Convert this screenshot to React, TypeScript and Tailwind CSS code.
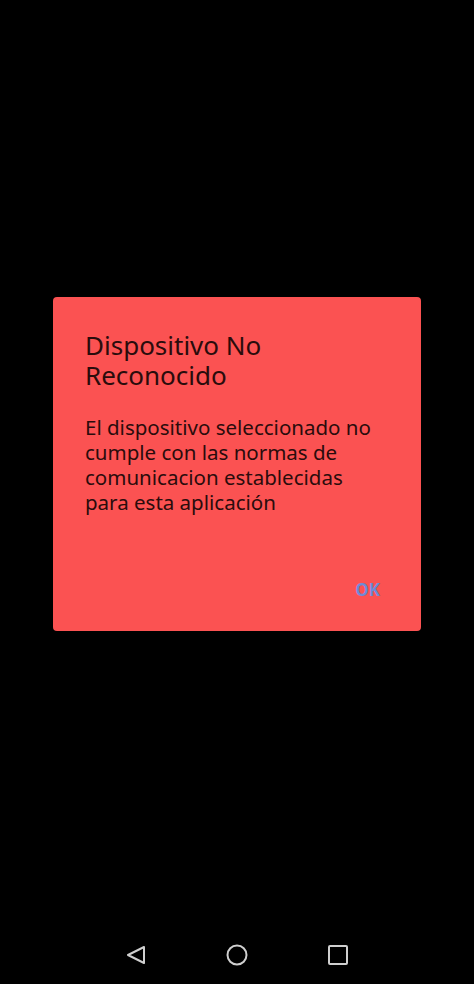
export default function App() {
  return (
    <div
      className="w-[474px] h-[984px] bg-black flex flex-col"
      style={{ fontFamily: '"Noto Sans", Roboto, sans-serif' }}
    >
      <div className="flex-1 flex items-start justify-center pt-[297px]">
        <div className="w-[368px] h-[334px] bg-[#fb5252] rounded-[4px] flex flex-col pt-[33px] pl-[32px] pr-[40px]">
          <h1 className="text-[26px] leading-[30px] text-[#2a0c0c] font-normal">
            Dispositivo No
            <br />
            Reconocido
          </h1>
          <p className="mt-[25px] text-[20.5px] leading-[25px] text-[#2a0c0c]">
            El dispositivo seleccionado no cumple con las normas de comunicacion establecidas para esta aplicación
          </p>
          <div className="mt-auto mb-[31px] flex justify-end pr-[1px]">
            <button className="text-[17px] font-bold text-[#6e8ad8] leading-[20px]">OK</button>
          </div>
        </div>
      </div>
      <div className="h-[56px] flex items-center justify-between px-[125px] pb-[2px]">
        <svg width="22" height="22" viewBox="0 0 22 22" fill="none" stroke="#cfcfcf" strokeWidth="2" strokeLinejoin="round">
          <path d="M19 3 L3 11 L19 19 Z" />
        </svg>
        <svg width="22" height="22" viewBox="0 0 22 22" fill="none" stroke="#cfcfcf" strokeWidth="2">
          <circle cx="11" cy="11" r="9.5" />
        </svg>
        <svg width="22" height="22" viewBox="0 0 22 22" fill="none" stroke="#cfcfcf" strokeWidth="2" strokeLinejoin="round">
          <rect x="2" y="2" width="18" height="18" rx="1" />
        </svg>
      </div>
    </div>
  );
}
